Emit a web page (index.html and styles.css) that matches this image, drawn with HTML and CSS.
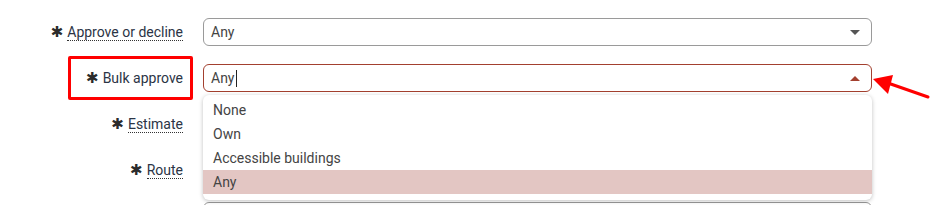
FILE: index.html
```html
<!DOCTYPE html>
<html lang="en">
<head>
    <meta charset="UTF-8">
    <title>Permissions</title>
    <link rel="stylesheet" href="styles.css">
</head>
<body>
    <div class="perm-form">
        <div class="form-row">
            <div class="field-label"><span class="req">✱</span><span class="hint">Approve or decline</span></div>
            <div class="select">
                <span class="select-value">Any</span>
                <span class="caret caret-down"></span>
            </div>
        </div>

        <div class="form-row">
            <div class="field-label"><span class="req">✱</span><span>Bulk approve</span></div>
            <div class="select select-open">
                <span class="select-value">Any<span class="cursor"></span></span>
                <span class="caret caret-up"></span>
                <ul class="options">
                    <li>None</li>
                    <li>Own</li>
                    <li>Accessible buildings</li>
                    <li class="selected">Any</li>
                </ul>
            </div>
        </div>

        <!-- these two are covered by the open list -->
        <div class="form-row">
            <div class="field-label"><span class="req">✱</span><span class="hint">Estimate</span></div>
            <div class="select">
                <span class="select-value"></span>
                <span class="caret caret-down"></span>
            </div>
        </div>

        <div class="form-row">
            <div class="field-label"><span class="req">✱</span><span class="hint">Route</span></div>
            <div class="select">
                <span class="select-value"></span>
                <span class="caret caret-down"></span>
            </div>
        </div>

        <div class="form-row">
            <div class="field-label"></div>
            <div class="select">
                <span class="select-value"></span>
            </div>
        </div>

        <!-- annotation -->
        <div class="mark-box"></div>
        <svg class="mark-arrow" width="60" height="30" viewBox="0 0 60 30">
            <line x1="57" y1="27" x2="14" y2="12" stroke="#f00" stroke-width="3" stroke-linecap="round"/>
            <polygon points="2,9 22,5 17,24" fill="#f00"/>
        </svg>
    </div>
</body>
</html>
```

FILE: styles.css
```css
* {
    box-sizing: border-box;
}

body {
    margin: 0;
    background: #fff;
    font-family: Roboto, 'Liberation Sans', sans-serif;
    font-size: 14px;
    color: #333;
    overflow: hidden;
}

.perm-form {
    position: relative;
    height: 205px;
    overflow: hidden;
    padding-top: 18px;
    display: flex;
    flex-direction: column;
    gap: 18px;
}

.form-row {
    display: grid;
    grid-template-columns: 183px 669px;
    column-gap: 20px;
    align-items: center;
    flex-shrink: 0;
}

.field-label {
    display: flex;
    justify-content: flex-end;
    align-items: center;
    gap: 4px;
    color: #2b3445;
}

.req {
    font-family: 'DejaVu Sans', sans-serif;
    font-size: 15px;
    font-weight: bold;
    color: #2b2b2b;
}

.hint {
    border-bottom: 1px dotted #333;
    line-height: 16px;
}

.select {
    position: relative;
    height: 28px;
    border: 1px solid #9a9a9a;
    border-radius: 6px;
    display: flex;
    align-items: center;
    padding: 0 8px 0 7px;
    background: #fff;
}

.select-open {
    border-color: #a3402f;
}

.select-value {
    flex: 1;
    color: #444;
    display: flex;
    align-items: center;
}

.cursor {
    display: inline-block;
    width: 1px;
    height: 17px;
    background: #222;
    margin-left: 1px;
}

.caret {
    width: 0;
    height: 0;
    border-left: 5px solid transparent;
    border-right: 5px solid transparent;
    margin-right: 3px;
}

.caret-down {
    border-top: 5px solid #555;
}

.caret-up {
    border-bottom: 5px solid #a3402f;
}

.options {
    position: absolute;
    top: 30px;
    left: -1px;
    right: -1px;
    margin: 0;
    padding: 3px 0 6px;
    list-style: none;
    background: #fff;
    border-radius: 6px;
    box-shadow: 0 1px 4px rgba(0, 0, 0, 0.25);
    z-index: 2;
}

.options li {
    height: 24px;
    line-height: 24px;
    padding-left: 10px;
    color: #444;
}

.options li.selected {
    background: #e3c6c3;
}

.mark-box {
    position: absolute;
    left: 68px;
    top: 56px;
    width: 125px;
    height: 44px;
    border: 3px solid #f00;
    border-radius: 2px;
}

.mark-arrow {
    position: absolute;
    left: 871px;
    top: 70px;
}
```
